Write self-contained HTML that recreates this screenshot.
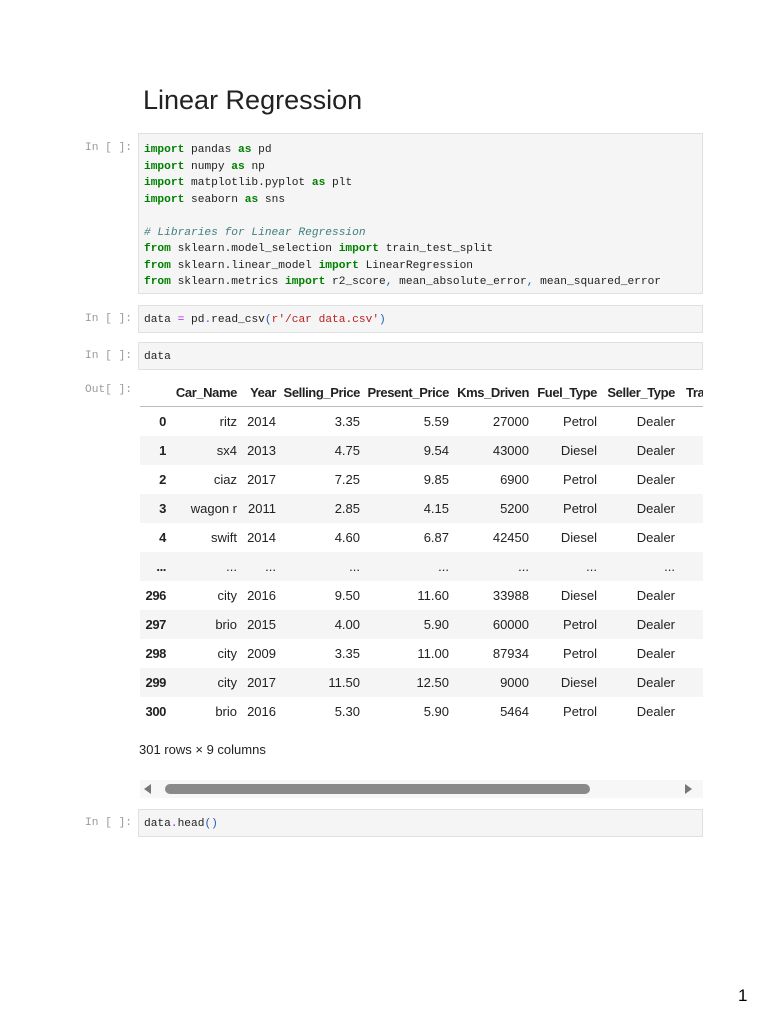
<!DOCTYPE html>
<html><head><meta charset="utf-8"><style>
body{margin:0;width:768px;height:1024px;background:#fff;position:relative;overflow:hidden;font-family:"Liberation Sans",sans-serif}
.a{position:absolute}
.lbl{position:absolute;left:85px;font:11.2px "Liberation Mono",monospace;color:#9a9a9a;white-space:pre}
.cell{position:absolute;left:138px;width:563px;background:#f5f5f5;border:1px solid #e0e0e0}
pre{margin:0;font:11.2px/16.5px "Liberation Mono",monospace;color:#222;padding:0 5px}
.k{color:#008000;font-weight:bold}.c{color:#408080;font-style:italic}.s{color:#ba2121}.o{color:#aa22ff}.p{color:#1e5fb4}
.row{position:absolute;left:140px;width:563px;height:29px}
.g{background:#f5f5f5}
.t{position:absolute;width:120px;text-align:right;font-size:13px;color:#222;line-height:29px;white-space:nowrap}
.b{font-weight:bold;letter-spacing:-0.4px}
</style></head><body>
<div class="a" style="left:143px;top:85px;font-size:27px;color:#222">Linear Regression</div>

<div class="lbl" style="top:142px">In [ ]:</div>
<div class="cell" style="top:133px;height:159px"><pre style="padding-top:8px"><span class="k">import</span> pandas <span class="k">as</span> pd
<span class="k">import</span> numpy <span class="k">as</span> np
<span class="k">import</span> matplotlib.pyplot <span class="k">as</span> plt
<span class="k">import</span> seaborn <span class="k">as</span> sns

<span class="c"># Libraries for Linear Regression</span>
<span class="k">from</span> sklearn.model_selection <span class="k">import</span> train_test_split
<span class="k">from</span> sklearn.linear_model <span class="k">import</span> LinearRegression
<span class="k">from</span> sklearn.metrics <span class="k">import</span> r2_score<span class="p">,</span> mean_absolute_error<span class="p">,</span> mean_squared_error</pre></div>

<div class="lbl" style="top:313px">In [ ]:</div>
<div class="cell" style="top:305px;height:26px"><pre style="padding-top:6px">data <span class="o">=</span> pd<span class="o">.</span>read_csv<span class="p">(</span><span class="s">r'/car data.csv'</span><span class="p">)</span></pre></div>

<div class="lbl" style="top:350px">In [ ]:</div>
<div class="cell" style="top:342px;height:26px"><pre style="padding-top:6px">data</pre></div>

<div class="lbl" style="top:384px">Out[ ]:</div>

<div class="a" style="left:140px;top:378px;width:563px;height:340px;overflow:hidden">
<div class="row" style="left:0;top:0;border-bottom:1px solid #bbb;height:28px"></div>
</div>
<div id="tbl" class="a" style="left:0;top:0;width:703px;height:1024px;overflow:hidden"></div>

<div class="a" style="left:139px;top:742px;font-size:13px;color:#222">301 rows × 9 columns</div>

<div class="a" style="left:140px;top:780px;width:563px;height:18px;background:#f7f7f7"></div>
<div class="a" style="left:165px;top:784px;width:425px;height:10px;border-radius:5px;background:#8a8a8a"></div>
<div class="a" style="left:144px;top:784px;width:0;height:0;border-top:5px solid transparent;border-bottom:5px solid transparent;border-right:7px solid #777"></div>
<div class="a" style="left:685px;top:784px;width:0;height:0;border-top:5px solid transparent;border-bottom:5px solid transparent;border-left:7px solid #777"></div>

<div class="lbl" style="top:817px">In [ ]:</div>
<div class="cell" style="top:809px;height:26px"><pre style="padding-top:6px">data<span class="o">.</span>head<span class="p">()</span></pre></div>

<div class="a" style="left:738px;top:986px;font-size:17px;color:#000">1</div>

<script>
var rows=[["0","ritz","2014","3.35","5.59","27000","Petrol","Dealer"],
["1","sx4","2013","4.75","9.54","43000","Diesel","Dealer"],
["2","ciaz","2017","7.25","9.85","6900","Petrol","Dealer"],
["3","wagon r","2011","2.85","4.15","5200","Petrol","Dealer"],
["4","swift","2014","4.60","6.87","42450","Diesel","Dealer"],
["...","...","...","...","...","...","...","..."],
["296","city","2016","9.50","11.60","33988","Diesel","Dealer"],
["297","brio","2015","4.00","5.90","60000","Petrol","Dealer"],
["298","city","2009","3.35","11.00","87934","Petrol","Dealer"],
["299","city","2017","11.50","12.50","9000","Diesel","Dealer"],
["300","brio","2016","5.30","5.90","5464","Petrol","Dealer"]];
var R=[166,237,276,360,449,529,597,675];
var h="";
var hd=["","Car_Name","Year","Selling_Price","Present_Price","Kms_Driven","Fuel_Type","Seller_Type"];
for(var j=1;j<8;j++)h+='<div class="t b" style="top:378px;left:'+(R[j]-120)+'px">'+hd[j]+'</div>';
h+='<div class="t b" style="top:378px;left:686px;text-align:left">Transmission</div>';
for(var i=0;i<rows.length;i++){var y=407+i*29;
if(i%2==1)h+='<div class="row g" style="top:'+y+'px"></div>';
for(var j=0;j<8;j++){var v=rows[i][j];h+='<div class="t'+(j==0?' b':'')+'" style="top:'+y+'px;left:'+(R[j]-120)+'px">'+v+'</div>';}
}
document.getElementById('tbl').innerHTML=h;
</script>
</body></html>
